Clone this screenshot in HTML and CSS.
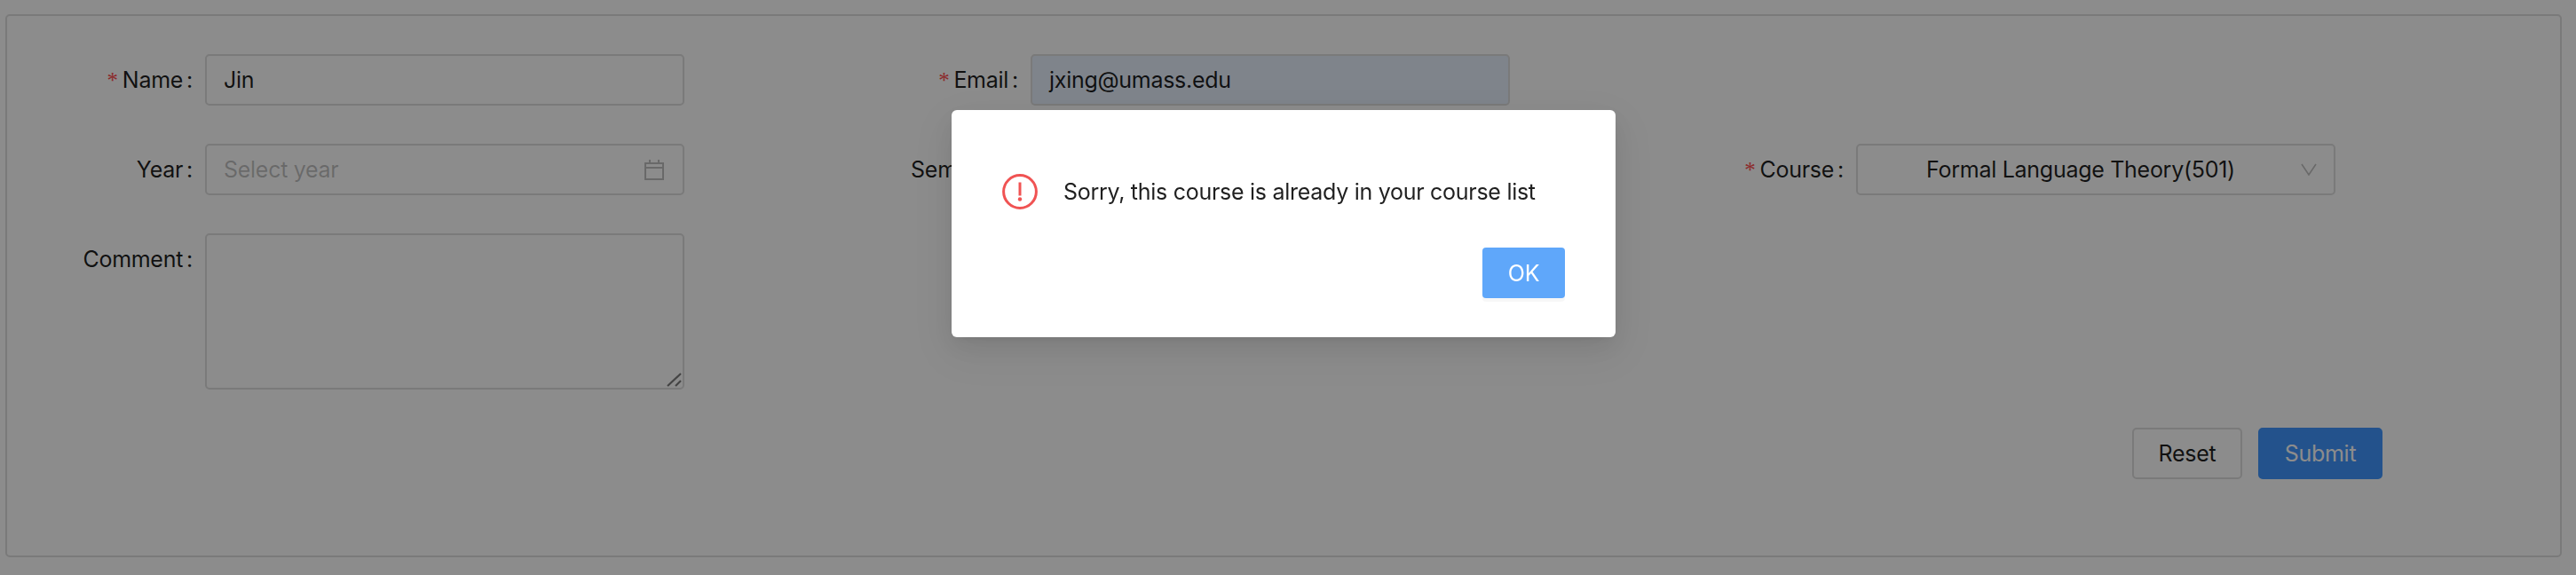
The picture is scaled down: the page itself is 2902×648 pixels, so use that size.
FILE: index.html
```html
<!DOCTYPE html>
<html lang="en">
<head>
<meta charset="utf-8">
<title>Course form</title>
<link rel="stylesheet" href="styles.css">
</head>
<body>
<main class="page">
  <form class="card">
    <div class="grid">
      <div class="item">
        <label class="label"><span class="req">*</span>Name<span class="colon">:</span></label>
        <div class="field">Jin</div>
      </div>
      <div class="item">
        <label class="label"><span class="req">*</span>Email<span class="colon">:</span></label>
        <div class="field autofill">jxing@umass.edu</div>
      </div>
      <div class="item"></div>
      <div class="item">
        <label class="label">Year<span class="colon">:</span></label>
        <div class="field placeholder">
          <span>Select year</span>
          <svg class="cal" viewBox="0 0 24 24" width="24" height="24" aria-hidden="true">
            <path d="M2 5h20v18H2zM2 10h20M7 1v5M17 1v5" fill="none" stroke="currentColor" stroke-width="2"/>
          </svg>
        </div>
      </div>
      <div class="item">
        <label class="label">Semester<span class="colon">:</span></label>
        <div class="field"></div>
      </div>
      <div class="item">
        <label class="label"><span class="req">*</span>Course<span class="colon">:</span></label>
        <div class="field select">
          <span class="select-text">Formal Language Theory(501)</span>
          <svg class="chev" viewBox="0 0 18 14" width="18" height="14" aria-hidden="true">
            <path d="M1 1l8 12 8-12" fill="none" stroke="currentColor" stroke-width="1.6"/>
          </svg>
        </div>
      </div>
      <div class="item top">
        <label class="label lbl-top">Comment<span class="colon">:</span></label>
        <div class="area">
          <svg class="grip" viewBox="0 0 18 16" width="18" height="16" aria-hidden="true">
            <path d="M1 15L16 1M10 15l6-6" fill="none" stroke="currentColor" stroke-width="2.200"/>
          </svg>
        </div>
      </div>
    </div>
    <div class="actions">
      <button type="button" class="btn">Reset</button>
      <button type="button" class="btn primary">Submit</button>
    </div>
  </form>
</main>
<div class="mask"></div>
<div class="modal" role="dialog">
  <div class="modal-body">
    <svg class="err" viewBox="0 0 40 40" width="40" height="40" aria-hidden="true">
      <circle cx="20" cy="20" r="18.4" fill="none" stroke="currentColor" stroke-width="3"/>
      <path d="M20 9.500v15" fill="none" stroke="currentColor" stroke-width="3"/>
      <circle cx="20" cy="28.500" r="2.200" fill="currentColor"/>
    </svg>
    <p class="msg">Sorry, this course is already in your course list</p>
  </div>
  <div class="modal-foot">
    <button type="button" class="ok">OK</button>
  </div>
</div>
</body>
</html>
```
FILE: styles.css
```css
* { box-sizing: border-box; }
html, body { margin: 0; height: 648px; overflow: hidden; background: #fff; }
body {
  font-family: Inter, "Noto Sans", "Liberation Sans", sans-serif;
  font-size: 25px;
  letter-spacing: -.28px;
  color: rgba(0, 0, 0, .88);
}
.page { padding: 16px 16px 20px 6px; height: 648px; }
.card {
  height: 612px;
  border: 2px solid #dedede;
  border-radius: 5px;
  padding: 43px 0 0 23px;
}
.grid {
  display: grid;
  grid-template-columns: repeat(3, 930px);
  grid-template-rows: 58px 58px 176px;
  row-gap: 43px;
}
.item { display: flex; align-items: center; }
.item.top { align-items: flex-start; }
.label {
  width: 200px;
  display: flex;
  justify-content: flex-end;
  align-items: baseline;
  white-space: nowrap;
}
.lbl-top { line-height: 58px; }
.req {
  font-family: "Liberation Serif", serif;
  color: #ff4d4f;
  margin-right: 5px;
}
.colon { margin: 0 14px 0 4px; }
.field {
  width: 540px;
  height: 58px;
  border: 2px solid #dedede;
  border-radius: 5px;
  padding: 0 20px 0 19px;
  display: flex;
  align-items: center;
  justify-content: space-between;
  background: #fff;
}
.autofill { background: #e8f0fe; }
.placeholder { color: rgba(0, 0, 0, .25); }
.select-text { flex: 1; text-align: center; padding-right: 16px; white-space: nowrap; }
.chev { color: rgba(0, 0, 0, .25); margin-right: -1px; }
.area {
  position: relative;
  width: 540px;
  height: 176px;
  border: 2px solid #dedede;
  border-radius: 5px;
}
.grip { position: absolute; right: 0; bottom: 1px; color: #7c7c7c; }
.actions {
  display: flex;
  justify-content: flex-end;
  gap: 18px;
  margin-top: 43px;
  padding-right: 200px;
}
.btn {
  font: inherit;
  letter-spacing: inherit;
  height: 58px;
  width: 124px;
  background: #fff;
  color: inherit;
  border: 2px solid #dedede;
  border-radius: 5px;
  padding: 0;
}
.primary {
  width: 140px;
  background: #4096ff;
  border-color: #4096ff;
  color: #fff;
}
.mask { position: fixed; inset: 0; background: rgba(0, 0, 0, .45); }
.modal {
  position: fixed;
  left: 1072px;
  top: 124px;
  width: 748px;
  height: 256px;
  background: #fff;
  border-radius: 6px;
  padding: 72px 57px 44px;
  box-shadow: 0 11px 29px 0 rgba(0, 0, 0, .08), 0 5px 11px -7px rgba(0, 0, 0, .12), 0 16px 50px 14px rgba(0, 0, 0, .05);
}
.modal-body { display: flex; align-items: center; gap: 29px; height: 40px; }
.err { color: #f05353; flex: none; }
.msg { margin: 0; white-space: nowrap; }
.modal-foot { display: flex; justify-content: flex-end; margin-top: 43px; }
.ok {
  font: inherit;
  letter-spacing: inherit;
  width: 93px;
  height: 57px;
  border: 0;
  border-radius: 4px;
  padding: 0;
  background: #5fa7fa;
  color: #fff;
  box-shadow: 0 4px 0 rgba(0, 0, 0, .03);
}
```
